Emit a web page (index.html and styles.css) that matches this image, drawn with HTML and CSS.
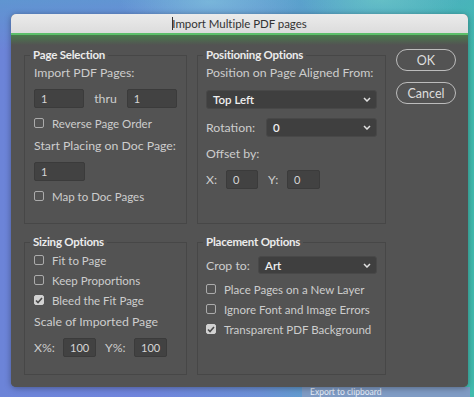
FILE: index.html
```html
<!DOCTYPE html>
<html lang="en">
<head>
<meta charset="utf-8">
<title>Import Multiple PDF pages</title>
<link rel="stylesheet" href="styles.css">
</head>
<body>
<div class="desktop">
  <div class="export-tab">Export to clipboard</div>
  <div class="dialog">
    <div class="titlebar"><span class="caret"></span>Import Multiple PDF pages</div>
    <div class="accent"></div>
    <div class="body">
      <div class="groups">
        <fieldset class="group">
          <legend>Page Selection</legend>
          <div class="label first">Import PDF Pages:</div>
          <div class="row after-label">
            <div class="field w51">1</div>
            <span class="thru">thru</span>
            <div class="field w51">1</div>
          </div>
          <div class="check after-field"><span class="box"></span>Reverse Page Order</div>
          <div class="label after-check">Start Placing on Doc Page:</div>
          <div class="row after-label">
            <div class="field w51">1</div>
          </div>
          <div class="check after-field"><span class="box"></span>Map to Doc Pages</div>
        </fieldset>

        <fieldset class="group right">
          <legend>Positioning Options</legend>
          <div class="label first">Position on Page Aligned From:</div>
          <div class="select wide after-select-label"><span>Top Left</span><svg width="8" height="5" viewBox="0 0 8 5"><polyline points="1,1 4,4 7,1" fill="none" stroke="#e0e0e0" stroke-width="1.5"/></svg></div>
          <div class="row after-select">
            <span class="inline-label rot">Rotation:</span>
            <div class="select grow"><span>0</span><svg width="8" height="5" viewBox="0 0 8 5"><polyline points="1,1 4,4 7,1" fill="none" stroke="#e0e0e0" stroke-width="1.5"/></svg></div>
          </div>
          <div class="label after-select">Offset by:</div>
          <div class="row after-label">
            <span class="inline-label xlab">X:</span>
            <div class="field w32">0</div>
            <span class="inline-label ylab">Y:</span>
            <div class="field w33">0</div>
          </div>
        </fieldset>

        <fieldset class="group">
          <legend>Sizing Options</legend>
          <div class="check first-check"><span class="box"></span>Fit to Page</div>
          <div class="check next-check"><span class="box"></span>Keep Proportions</div>
          <div class="check next-check"><span class="box checked"><svg width="8" height="7" viewBox="0 0 8 7"><polyline points="1,3.5 3,5.5 7,1" fill="none" stroke="#4a4a4a" stroke-width="1.6"/></svg></span>Bleed the Fit Page</div>
          <div class="label after-check-small">Scale of Imported Page</div>
          <div class="row after-label">
            <span class="inline-label xplab">X%:</span>
            <div class="field w33">100</div>
            <span class="inline-label yplab">Y%:</span>
            <div class="field w33">100</div>
          </div>
        </fieldset>

        <fieldset class="group right">
          <legend>Placement Options</legend>
          <div class="row crop-row">
            <span class="inline-label crop">Crop to:</span>
            <div class="select grow short"><span>Art</span><svg width="8" height="5" viewBox="0 0 8 5"><polyline points="1,1 4,4 7,1" fill="none" stroke="#e0e0e0" stroke-width="1.5"/></svg></div>
          </div>
          <div class="check after-crop"><span class="box"></span>Place Pages on a New Layer</div>
          <div class="check next-check"><span class="box"></span>Ignore Font and Image Errors</div>
          <div class="check next-check"><span class="box checked"><svg width="8" height="7" viewBox="0 0 8 7"><polyline points="1,3.5 3,5.5 7,1" fill="none" stroke="#4a4a4a" stroke-width="1.6"/></svg></span>Transparent PDF Background</div>
        </fieldset>
      </div>
      <div class="buttons">
        <button class="btn">OK</button>
        <button class="btn">Cancel</button>
      </div>
    </div>
  </div>
</div>
</body>
</html>
```

FILE: styles.css
```css
* { box-sizing: border-box; }
html, body { margin: 0; padding: 0; }
body {
  width: 474px;
  height: 397px;
  overflow: hidden;
  font-family: Lato, "Open Sans", sans-serif;
}
.desktop {
  position: relative;
  width: 474px;
  height: 397px;
  padding: 14px 0 0 11px;
  background:
    radial-gradient(ellipse 90px 30px at 210px 2px, rgba(140, 205, 225, 0.55), rgba(140, 205, 225, 0) 100%),
    radial-gradient(ellipse 80px 26px at 380px 0px, rgba(120, 210, 200, 0.5), rgba(120, 210, 200, 0) 100%),
    linear-gradient(180deg, rgba(80, 170, 200, 0.45) 0px, rgba(80, 170, 200, 0) 50px),
    linear-gradient(90deg, #6c84d8 0%, #7084dc 30%, #6b90d6 55%, #56a8c6 75%, #41bcae 100%);
}
.export-tab {
  position: absolute;
  left: 302px;
  top: 387px;
  width: 168px;
  height: 10px;
  padding-left: 8px;
  background: #7f9bc4;
  color: #e8eef8;
  font-size: 8.5px;
  line-height: 10px;
  white-space: nowrap;
  overflow: hidden;
}
.dialog {
  position: relative;
  width: 457px;
  height: 373px;
  border-radius: 5px;
  background: #535353;
  box-shadow: 0 1px 6px rgba(0, 0, 0, 0.35);
  overflow: hidden;
  display: flex;
  flex-direction: column;
}
.titlebar {
  height: 19px;
  background: linear-gradient(#ebebeb, #dcdcdc);
  color: #333;
  font-size: 11.5px;
  letter-spacing: -0.05px;
  display: flex;
  align-items: center;
  justify-content: center;
}
.caret {
  display: inline-block;
  width: 1px;
  height: 13px;
  background: #333;
  margin-right: -1px;
}
.accent {
  height: 2px;
  background: #5cbf6a;
}
.body {
  flex: 1;
  display: flex;
  padding: 12px 12px 12px 13px;
  background: linear-gradient(#4a7a4c 0px, #535353 10px);
}
.groups {
  display: grid;
  grid-template-columns: 163px 189px;
  grid-template-rows: 177px 141px;
  gap: 10px;
}
.buttons {
  margin-left: 10px;
  padding-top: 2px;
  width: 60px;
  display: flex;
  flex-direction: column;
  gap: 11px;
}
.btn {
  height: 22px;
  border: 1.5px solid #bcbcbc;
  border-radius: 11px;
  background: transparent;
  color: #dedede;
  font-family: Lato, "Open Sans", sans-serif;
  font-size: 12.5px;
  padding: 0;
}
.group {
  margin: 0;
  padding: 0 9px;
  min-width: 0;
  border: 1px solid #474747;
  display: flex;
  flex-direction: column;
  color: #cdcdcd;
  font-size: 12.3px;
}
.group.right { padding: 0 8px; }
.group legend {
  padding: 0 3px;
  margin-left: -4px;
  line-height: 16px;
  font-size: 11.5px;
  letter-spacing: -0.2px;
  font-weight: 700;
  color: #ececec;
}
.group.right legend { margin-left: -3px; }
.label { height: 16px; line-height: 16px; white-space: nowrap; }
.row { display: flex; align-items: center; }
.first { margin-top: 2px; }
.after-label { margin-top: 8px; }
.after-field { margin-top: 7px; }
.after-check { margin-top: 7px; }
.after-select-label { margin-top: 9px; }
.after-select { margin-top: 9px; }
.first-check { margin-top: 2px; }
.next-check { margin-top: 4px; }
.after-check-small { margin-top: 6px; }
.crop-row { margin-top: 6px; }
.after-crop { margin-top: 7px; }

.field {
  height: 19px;
  background: #424242;
  border: 1px solid #3b3b3b;
  border-radius: 2px;
  color: #d6d6d6;
  font-size: 11px;
  line-height: 17px;
  padding-left: 6px;
}
.w51 { width: 51px; }
.w32 { width: 32px; }
.w33 { width: 33px; }
.thru { margin: 0 10px; }
.inline-label { white-space: nowrap; }
.rot { width: 60px; }
.xlab { width: 20px; }
.ylab { margin-left: 10px; width: 19px; }
.xplab { width: 29px; }
.yplab { margin-left: 9px; width: 29px; }
.crop { width: 52px; }

.select {
  height: 19px;
  background: #3f3f3f;
  border: 1px solid #484848;
  border-radius: 3px;
  display: flex;
  align-items: center;
  justify-content: space-between;
  padding: 0 5px 0 6px;
  color: #efefef;
  font-size: 11.5px;
  font-weight: 600;
}
.select.short { height: 18px; }
.select.wide { width: 171px; }
.select.grow { flex: 1; }

.check {
  display: flex;
  align-items: center;
  height: 16px;
  white-space: nowrap;
  font-size: 11.5px;
}
.box {
  width: 10px;
  height: 10px;
  border: 1.5px solid #ababab;
  border-radius: 2px;
  margin-right: 8px;
  flex: none;
  display: flex;
  align-items: center;
  justify-content: center;
}
.box.checked {
  background: #d2d2d2;
  border-color: #d2d2d2;
}
```
